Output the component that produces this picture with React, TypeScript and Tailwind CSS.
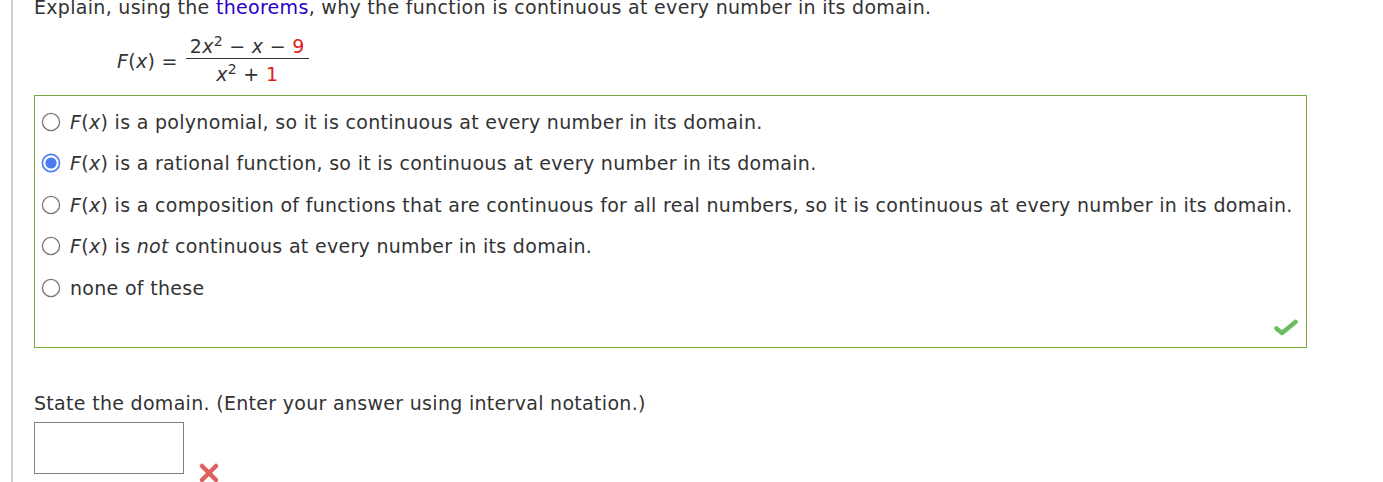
const font = { fontFamily: '"DejaVu Sans", Verdana, sans-serif', letterSpacing: '0.3px' };

function Radio({ checked }: { checked?: boolean }) {
  return (
    <svg width="20" height="20" viewBox="0 0 20 20" className="shrink-0">
      {checked ? (
        <>
          <circle cx="10" cy="10" r="8.6" fill="white" stroke="#4b7cf0" strokeWidth="1.6" />
          <circle cx="10" cy="10" r="5.6" fill="#4b7cf0" />
        </>
      ) : (
        <circle cx="10" cy="10" r="8.6" fill="white" stroke="#767676" strokeWidth="1.3" />
      )}
    </svg>
  );
}

function Fx() {
  return (
    <>
      <i>F</i>(<i>x</i>)
    </>
  );
}

const options: { content: React.ReactNode; checked?: boolean }[] = [
  { content: <><Fx /> is a polynomial, so it is continuous at every number in its domain.</> },
  { content: <><Fx /> is a rational function, so it is continuous at every number in its domain.</>, checked: true },
  { content: <><Fx /> is a composition of functions that are continuous for all real numbers, so it is continuous at every number in its domain.</> },
  { content: <><Fx /> is <i>not</i> continuous at every number in its domain.</> },
  { content: <>none of these</> },
];

export default function App() {
  return (
    <div className="w-[1383px] h-[482px] overflow-hidden bg-white text-[#333] text-[19px]" style={font}>
      <div className="flow-root ml-[11px] h-full border-l-2 border-[#d0d0d0] pl-[21px]">
        <p className="mt-[-6px] leading-[26px]">
          Explain, using the <span className="text-[#2a00c8]">theorems</span>, why the function is continuous at every number in its domain.
        </p>

        <div className="mt-[14px] ml-[83px] flex items-center gap-[8px]">
          <span><Fx /> =</span>
          <div className="flex flex-col items-center">
            <span className="px-[4px] leading-[24px] border-b border-[#333]">
              2<i>x</i><sup className="text-[14px]">2</sup> − <i>x</i> − <span className="text-[#e0201a]">9</span>
            </span>
            <span className="leading-[30px]">
              <i>x</i><sup className="text-[14px]">2</sup> + <span className="text-[#e0201a]">1</span>
            </span>
          </div>
        </div>

        <div className="mt-[6px] w-[1273px] h-[253px] border border-[#76a83a] flex flex-col pt-[5px] px-[6px]">
          {options.map((o, i) => (
            <div key={i} className="flex items-center gap-[9px] h-[41.5px]">
              <Radio checked={o.checked} />
              <span className="whitespace-nowrap">{o.content}</span>
            </div>
          ))}
          <div className="mt-auto mb-[11px] flex justify-end pr-[2px]">
            <svg width="24" height="17" viewBox="0 0 24 17">
              <path d="M2.5 9.5 L8 14 L21.5 3" fill="none" stroke="#6cbf60" strokeWidth="4.5" strokeLinecap="round" strokeLinejoin="round" />
            </svg>
          </div>
        </div>

        <p className="mt-[42px] leading-[26px]">State the domain. (Enter your answer using interval notation.)</p>
        <div className="mt-[6px] flex items-end gap-[14px]">
          <div className="w-[150px] h-[52px] border border-[#808080]" />
          <svg width="22" height="22" viewBox="0 0 22 22" className="mb-[-10px]">
            <path d="M4 4 L18 18 M18 4 L4 18" stroke="#e06060" strokeWidth="4.5" strokeLinecap="round" />
          </svg>
        </div>
      </div>
    </div>
  );
}
